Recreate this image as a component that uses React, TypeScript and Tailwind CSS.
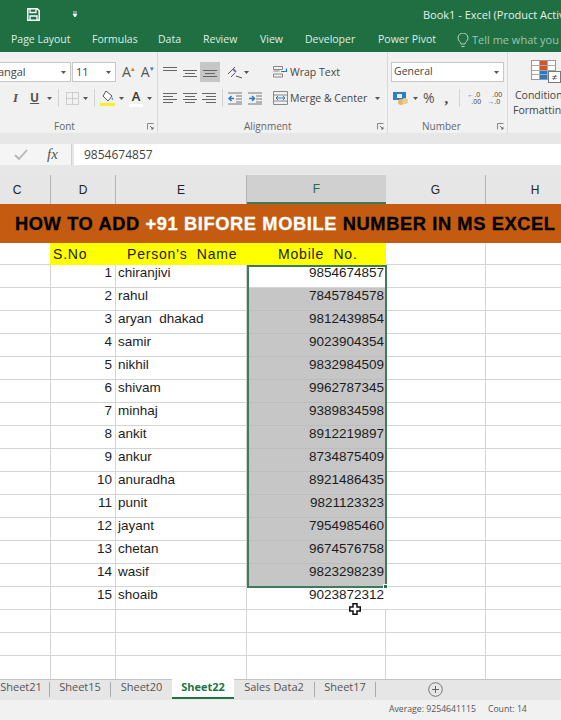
import React from 'react';

const people: [string, string][] = [
  ['chiranjivi', '9854674857'],
  ['rahul', '7845784578'],
  ['aryan  dhakad', '9812439854'],
  ['samir', '9023904354'],
  ['nikhil', '9832984509'],
  ['shivam', '9962787345'],
  ['minhaj', '9389834598'],
  ['ankit', '8912219897'],
  ['ankur', '8734875409'],
  ['anuradha', '8921486435'],
  ['punit', '9821123323'],
  ['jayant', '7954985460'],
  ['chetan', '9674576758'],
  ['wasif', '9823298239'],
  ['shoaib', '9023872312'],
];

const ribbonTabs = [
  ['Page Layout', 'w-[81px]'],
  ['Formulas', 'w-[66px]'],
  ['Data', 'w-[45px]'],
  ['Review', 'w-[57px]'],
  ['View', 'w-[45px]'],
  ['Developer', 'w-[73px]'],
  ['Power Pivot', 'w-[79px]'],
];

const sheetTabs = ['Sheet15', 'Sheet20', 'Sheet22', 'Sales Data2', 'Sheet17'];

const Caret = () => (
  <svg width="7" height="5" viewBox="0 0 7 5" className="shrink-0">
    <path d="M1 1h5L3.5 4z" fill="#555" />
  </svg>
);

// lignes horizontales pour les boutons d'alignement
const Lines = ({ rows, color = '#666' }: { rows: [number, number][]; color?: string }) => (
  <svg width="14" height="12" viewBox="0 0 14 12" className="shrink-0">
    {rows.map(([x, w], i) => (
      <rect key={i} x={x} y={i * 3 + 1} width={w} height="1" fill={color} />
    ))}
  </svg>
);

const Launcher = () => (
  <svg width="7" height="7" viewBox="0 0 7 7" className="shrink-0">
    <path d="M.5 6.5v-6h6" fill="none" stroke="#888" />
    <path d="M3 3l3 3M6 4v2H4" fill="none" stroke="#666" />
  </svg>
);

const Indent = ({ flip }: { flip?: boolean }) => (
  <svg width="14" height="13" viewBox="0 0 14 13" className="shrink-0">
    <path d="M0 1h14M8 4h6M8 7h6M8 10h6M0 12h14" stroke="#777" strokeWidth="1" />
    <path d={flip ? 'M1 6.5h5M4 4l2.5 2.5L4 9' : 'M6 6.5H1M3.5 4L1 6.5 3.5 9'} stroke="#2b79c2" strokeWidth="1.5" fill="none" />
  </svg>
);

const GroupLabel = ({ text, className }: { text: string; className: string }) => (
  <div className="mt-auto flex h-[14px] items-center">
    <span className={`text-[10px] text-[#666] ${className}`}>{text}</span>
    <span className="ml-auto mr-[3px] flex">
      <Launcher />
    </span>
  </div>
);

function Ribbon() {
  return (
    <div className="flex h-[81px] shrink-0 bg-[#f1f1f1] text-[#444]">
      {/* Font */}
      <div className="flex w-[158px] shrink-0 flex-col border-r border-[#d8d8d8] pt-[10px]">
        <div className="flex h-[20px] items-center">
          <div className="flex h-full w-[71px] items-center overflow-hidden border border-l-0 border-[#c8c8c8] bg-white pr-[3px]">
            <span className="-ml-[12px] text-[11px]">Mangal</span>
            <span className="ml-auto">
              <Caret />
            </span>
          </div>
          <div className="ml-[1px] flex h-full w-[44px] items-center border border-[#c8c8c8] bg-white px-[3px]">
            <span className="text-[11px]">11</span>
            <span className="ml-auto">
              <Caret />
            </span>
          </div>
          <span className="ml-[6px] text-[14px] leading-none text-[#555]">A</span>
          <span className="mb-[8px] text-[7px] leading-none text-[#c07a1d]">▴</span>
          <span className="ml-[6px] text-[14px] leading-none text-[#555]">A</span>
          <span className="mb-[8px] text-[7px] leading-none text-[#2b79c2]">▾</span>
        </div>
        <div className="mt-[5px] flex h-[22px] items-center">
          <span className="ml-[13px] font-['Liberation_Serif',serif] text-[13px] font-bold italic text-[#555]">I</span>
          <span className="ml-[12px] text-[12px] font-bold text-[#555] underline">U</span>
          <span className="ml-[7px]">
            <Caret />
          </span>
          <span className="ml-[5px] h-[18px] w-px bg-[#d4d4d4]" />
          <svg width="13" height="13" viewBox="0 0 13 13" className="ml-[7px] shrink-0">
            <path d="M.5.5h12v12H.5zM6.5.5v12M.5 6.5h12" fill="none" stroke="#aaa" strokeDasharray="1 1" />
          </svg>
          <span className="ml-[3px]">
            <Caret />
          </span>
          <span className="ml-[5px] h-[18px] w-px bg-[#d4d4d4]" />
          <div className="ml-[5px] flex w-[15px] flex-col items-center">
            <svg width="13" height="12" viewBox="0 0 13 12" className="shrink-0">
              <path d="M5 1l6 5-4 5-5-5z" fill="#fff" stroke="#555" />
              <path d="M11 7c1 1.500 1.500 2.500.5 3-1-.5-1-1.500-.5-3z" fill="#3b8fd0" />
            </svg>
            <span className="mt-[1px] h-[3px] w-[15px] bg-[#f6f02c]" />
          </div>
          <span className="ml-[3px]">
            <Caret />
          </span>
          <div className="ml-[4px] flex w-[14px] flex-col items-center">
            <span className="text-[13px] font-semibold leading-[13px] text-[#333]">A</span>
            <span className="mt-[1px] h-[3px] w-[14px] bg-white" />
          </div>
          <span className="ml-[3px]">
            <Caret />
          </span>
        </div>
        <GroupLabel text="Font" className="ml-[54px]" />
      </div>

      {/* Alignment */}
      <div className="flex w-[230px] shrink-0 flex-col border-r border-[#d8d8d8] pt-[10px]">
        <div className="flex h-[20px] items-center">
          <span className="ml-[5px]">
            <Lines rows={[[0, 14], [0, 14], [20, 0]]} />
          </span>
          <span className="ml-[6px]">
            <Lines rows={[[20, 0], [0, 14], [2, 10], [0, 14]]} />
          </span>
          <span className="ml-[3px] flex h-[20px] w-[20px] items-center justify-center bg-[#c6c6c6]">
            <Lines rows={[[20, 0], [0, 14], [2, 10], [0, 14]]} />
          </span>
          <svg width="16" height="14" viewBox="0 0 16 14" className="ml-[7px] shrink-0">
            <path d="M1 9l7-7M4 12l4-4M9 11l6 2" stroke="#555" fill="none" />
            <path d="M6 4l3 3" stroke="#8a6ab0" strokeWidth="2" />
          </svg>
          <span className="ml-0">
            <Caret />
          </span>
          <svg width="15" height="14" viewBox="0 0 15 14" className="ml-[23px] shrink-0">
            <path d="M.5 1.500h9v3h-9zM.5 6h6M.5 9h9v3h-9z" fill="none" stroke="#888" />
            <path d="M8 6.500h5.500v-3" fill="none" stroke="#2b79c2" strokeWidth="1.200" />
          </svg>
          <span className="ml-[2px] whitespace-nowrap text-[10.5px] leading-none">Wrap Text</span>
        </div>
        <div className="mt-[5px] flex h-[22px] items-center">
          <span className="ml-[5px]">
            <Lines rows={[[0, 14], [0, 10], [0, 14], [0, 10]]} />
          </span>
          <span className="ml-[6px]">
            <Lines rows={[[0, 14], [2, 10], [0, 14], [2, 10]]} />
          </span>
          <span className="ml-[5px]">
            <Lines rows={[[0, 14], [4, 10], [0, 14], [4, 10]]} />
          </span>
          <span className="ml-[6px] h-[18px] w-px bg-[#d4d4d4]" />
          <span className="ml-[5px]">
            <Indent />
          </span>
          <span className="ml-[6px]">
            <Indent flip />
          </span>
          <svg width="15" height="14" viewBox="0 0 15 14" className="ml-[11px] shrink-0">
            <path d="M.5.5h14v13H.5zM.5 4h14M.5 10h14" fill="none" stroke="#888" />
            <path d="M3 7h9M5 5L3 7l2 2M10 5l2 2-2 2" fill="none" stroke="#2b79c2" />
          </svg>
          <span className="ml-[2px] whitespace-nowrap text-[10.5px] leading-none">Merge &amp; Center</span>
          <span className="ml-[7px]">
            <Caret />
          </span>
        </div>
        <GroupLabel text="Alignment" className="ml-[86px]" />
      </div>

      {/* Number */}
      <div className="flex w-[120px] shrink-0 flex-col border-r border-[#d8d8d8] pt-[10px]">
        <div className="ml-[3px] flex h-[20px] w-[113px] items-center border border-[#c8c8c8] bg-white px-[2px]">
          <span className="text-[10.5px]">General</span>
          <span className="ml-auto mr-[1px]">
            <Caret />
          </span>
        </div>
        <div className="mt-[5px] flex h-[22px] items-center">
          <svg width="16" height="15" viewBox="0 0 16 15" className="ml-[5px] shrink-0">
            <rect x="0" y="1" width="13" height="8" fill="#2f7fbe" />
            <rect x="4" y="3" width="5" height="4" fill="#e8eef5" />
            <circle cx="8" cy="11" r="3" fill="#e3b566" />
            <circle cx="12" cy="10" r="3" fill="#edcd8d" />
          </svg>
          <span className="ml-[3px]">
            <Caret />
          </span>
          <span className="ml-[4px] text-[14px] leading-none text-[#555]">%</span>
          <span className="ml-[10px] font-['Liberation_Serif',serif] text-[15px] font-bold leading-[10px] text-[#444]">,</span>
          <span className="ml-[11px] h-[18px] w-px bg-[#d4d4d4]" />
          <div className="ml-[7px] grid w-[15px] grid-cols-[7px_8px] font-['Liberation_Sans',sans-serif] text-[7px] leading-[7px]">
            <span className="text-[#2b79c2]">←</span>
            <span>.0</span>
            <span className="col-span-2 pl-[4px]">.00</span>
          </div>
          <div className="ml-[5px] grid w-[15px] grid-cols-[7px_8px] font-['Liberation_Sans',sans-serif] text-[7px] leading-[7px]">
            <span className="col-span-2 pl-[5px]">.00</span>
            <span className="text-[#2b79c2]">→</span>
            <span>.0</span>
          </div>
        </div>
        <GroupLabel text="Number" className="ml-[34px]" />
      </div>

      {/* Conditional formatting */}
      <div className="flex min-w-0 flex-1 flex-col overflow-hidden pt-[8px]">
        <div className="relative ml-[23px] h-[23px] w-[30px] shrink-0">
          <div className="grid h-[20px] w-[25px] grid-cols-3 grid-rows-4 gap-px border border-[#999] bg-[#aaa]">
            <span className="bg-white" />
            <span className="bg-[#d2562b]" />
            <span className="bg-white" />
            <span className="bg-white" />
            <span className="bg-[#d2562b]" />
            <span className="bg-white" />
            <span className="bg-white" />
            <span className="bg-[#2b79c2]" />
            <span className="bg-[#2b79c2]" />
            <span className="bg-white" />
            <span className="bg-[#2b79c2]" />
            <span className="bg-white" />
          </div>
          <span className="absolute bottom-0 right-0 flex h-[12px] w-[13px] items-center justify-center border border-[#777] bg-white text-[10px] leading-none text-[#333]">≠</span>
        </div>
        <span className="ml-[7px] mt-[5px] whitespace-nowrap text-[10.5px] leading-[15px]">Conditional</span>
        <span className="ml-[5px] whitespace-nowrap text-[10.5px] leading-[15px]">Formatting</span>
      </div>
    </div>
  );
}

function Sheet() {
  const cols = ['w-[51px]', 'w-[65px]', 'w-[131px]', 'w-[139px]', 'w-[100px]', 'flex-1'];
  return (
    <div className="relative h-[436px] shrink-0 overflow-hidden bg-white font-['Liberation_Sans',sans-serif] text-[13.500px] text-[#1c1c1c]">
      {/* yellow header */}
      <div className="flex h-[22px]">
        <span className="w-[50px] border-b border-[#d4d4d4]" />
        <div className="flex w-[336px] items-center bg-[#ffff00] text-[14px] tracking-[0.8px]">
          <span className="w-[65px] pl-[3px]">S.No</span>
          <span className="w-[132px] pl-[12px] whitespace-pre">Person's  Name</span>
          <span className="w-[139px] pl-[31px] whitespace-pre">Mobile  No.</span>
        </div>
        <span className={`${cols[4]} border-r border-b border-[#d4d4d4]`} />
        <span className="flex-1 border-b border-[#d4d4d4]" />
      </div>

      {people.map(([name, phone], i) => (
        <div key={name} className="flex h-[23px] leading-[15px]">
          <span className={`${cols[0]} border-r border-b border-[#d4d4d4]`} />
          <span className={`${cols[1]} border-r border-b border-[#d4d4d4] pr-[3px] text-right`}>{i + 1}</span>
          <span className={`${cols[2]} whitespace-pre border-r border-b border-[#d4d4d4] pl-[2px]`}>{name}</span>
          <span
            className={`${cols[3]} border-b pr-[2px] text-right ${
              i > 0 && i < 14 ? 'border-[#bdbdbd] bg-[#c6c6c6]' : 'border-[#d4d4d4]'
            }`}
          >
            {phone}
          </span>
          <span className={`${cols[4]} border-r border-b border-[#d4d4d4]`} />
          <span className="flex-1 border-b border-[#d4d4d4]" />
        </div>
      ))}

      {[0, 1, 2].map((i) => (
        <div key={i} className="flex h-[23px]">
          <span className={`${cols[0]} border-r ${i < 2 ? 'border-b' : ''} border-[#d4d4d4]`} />
          <span className={`${cols[1]} border-r ${i < 2 ? 'border-b' : ''} border-[#d4d4d4]`} />
          <span className={`${cols[2]} border-r ${i < 2 ? 'border-b' : ''} border-[#d4d4d4]`} />
          <span className={`${cols[3]} border-r ${i < 2 ? 'border-b' : ''} border-[#d4d4d4]`} />
          <span className={`${cols[4]} border-r ${i < 2 ? 'border-b' : ''} border-[#d4d4d4]`} />
          <span className={`flex-1 ${i < 2 ? 'border-b' : ''} border-[#d4d4d4]`} />
        </div>
      ))}

      {/* selection */}
      <div className="absolute left-[247px] top-[22px] h-[323px] w-[140px] border-2 border-[#3f7a5c]">
        <span className="absolute -bottom-[3px] -right-[3px] h-[5px] w-[5px] border border-white bg-[#217346]" />
      </div>

      {/* pointer */}
      <svg width="12" height="12" viewBox="0 0 12 12" className="absolute left-[349px] top-[360px]">
        <path d="M4 .75h4V4h3.250v4H8v3.250H4V8H.75V4H4z" fill="#fff" stroke="#111" strokeWidth="1.500" />
      </svg>
    </div>
  );
}

export default function App() {
  return (
    <div className="flex h-[720px] w-[561px] flex-col overflow-hidden bg-white font-['Open_Sans',sans-serif]">
      {/* title bar */}
      <div className="h-[52px] shrink-0 bg-[#1f6f43] text-[#dfeee5]">
        <div className="flex h-[28px] items-center">
          <svg width="13" height="13" viewBox="0 0 13 13" className="ml-[27px] shrink-0">
            <path d="M.75.75h9.500l2 2v9.500H.75z" fill="none" stroke="#fff" strokeWidth="1.500" />
            <path d="M3 1v3.500h6V1M3 12V8h7v4" fill="none" stroke="#fff" strokeWidth="1.300" />
          </svg>
          <svg width="6" height="7" viewBox="0 0 6 7" className="ml-[32px] shrink-0">
            <path d="M1 1h4M1 3h4l-2 3z" stroke="#fff" strokeWidth=".8" fill="#fff" />
          </svg>
          <span className="ml-[345px] whitespace-nowrap text-[11px] leading-none text-[#e7f1eb]">Book1 - Excel (Product Activation Failed)</span>
        </div>
        <div className="flex h-[24px] items-center text-[10.5px]">
          <div className="flex pl-[11px]">
            {ribbonTabs.map(([tab, width]) => (
              <span key={tab} className={`${width} whitespace-nowrap`}>
                {tab}
              </span>
            ))}
          </div>
          <svg width="12" height="15" viewBox="0 0 12 15" className="shrink-0">
            <path d="M4 11c0-2-3-3-3-6a5 5 0 0 1 10 0c0 3-3 4-3 6zM4.500 13.500h3" fill="none" stroke="#b9d6c5" />
          </svg>
          <span className="ml-[3px] whitespace-nowrap text-[11px] text-[#9fc4ae]">Tell me what you want to do</span>
        </div>
      </div>

      <Ribbon />

      {/* formula bar */}
      <div className="flex h-[42px] shrink-0 items-start bg-[#e7e7e7] pt-[11px]">
        <div className="flex h-[21px] w-[72px] items-center border-r border-[#d0d0d0] bg-[#f5f5f5]">
          <svg width="14" height="11" viewBox="0 0 14 11" className="ml-[14px] shrink-0">
            <path d="M1 6l4 4 8-9" fill="none" stroke="#b5b5b5" strokeWidth="1.800" />
          </svg>
          <span className="ml-[19px] font-['Liberation_Serif',serif] text-[15px] italic text-[#555]">fx</span>
        </div>
        <div className="ml-[2px] flex h-[21px] flex-1 items-center bg-white pl-[10px] text-[12px] text-[#444]">9854674857</div>
      </div>

      {/* column headers */}
      <div className="flex h-[29px] shrink-0 overflow-hidden bg-[#e6e6e6] font-['Liberation_Sans',sans-serif] text-[12px] text-[#222]">
        <span className="-ml-[16px] flex w-[67px] shrink-0 items-center justify-center border-r border-[#b5b5b5]">C</span>
        <span className="flex w-[65px] shrink-0 items-center justify-center border-r border-[#b5b5b5]">D</span>
        <span className="flex w-[131px] shrink-0 items-center justify-center border-r border-[#b5b5b5]">E</span>
        <span className="flex w-[139px] shrink-0 items-center justify-center border-b-2 border-[#3f7a5c] bg-[#d0d0d0] text-[#2a6b49]">F</span>
        <span className="flex w-[100px] shrink-0 items-center justify-center border-r border-[#b5b5b5]">G</span>
        <span className="flex w-[98px] shrink-0 items-center justify-center">H</span>
      </div>

      {/* band */}
      <div className="flex h-[39px] shrink-0 items-center whitespace-pre bg-[#c55a11] pl-[15px] font-['Liberation_Sans',sans-serif] text-[18.300px] font-bold tracking-[0.6px] text-black [-webkit-text-stroke:0.3px]">
        <span>HOW TO ADD </span>
        <span className="text-white">+91 BIFORE MOBILE </span>
        <span>NUMBER IN MS EXCEL</span>
      </div>

      <Sheet />

      {/* sheet tabs */}
      <div className="flex h-[21px] shrink-0 items-start border-t border-[#c4c4c4] bg-[#e6e6e6] text-[11px] leading-[12px] text-[#555]">
        <span className="-ml-[7px] mt-[2px] flex h-[15px] w-[57px] items-center justify-center border-r border-[#aaa] pb-[5px]">Sheet21</span>
        {sheetTabs.map((tab) =>
          tab === 'Sheet22' ? (
            <span key={tab} className="-mt-px flex h-[20px] w-[62px] items-start justify-center border-b-2 border-[#217346] bg-white pt-[2px] font-bold text-[#217346]">
              {tab}
            </span>
          ) : (
            <span key={tab} className={`mt-[2px] flex h-[15px] items-center justify-center border-r border-[#aaa] pb-[5px] ${tab === 'Sales Data2' ? 'w-[81px]' : 'w-[61px]'} ${tab === 'Sheet20' ? 'border-r-0' : ''}`}>
              {tab}
            </span>
          ),
        )}
        <svg width="15" height="15" viewBox="0 0 15 15" className="ml-[52px] mt-[2px] shrink-0">
          <circle cx="7.500" cy="7.500" r="6.800" fill="none" stroke="#777" />
          <path d="M7.500 4v7M4 7.500h7" stroke="#666" />
        </svg>
      </div>

      {/* status bar */}
      <div className="flex h-[20px] shrink-0 items-center overflow-hidden bg-[#f1f1f1] pl-[389px] text-[8.700px] text-[#555]">
        <span className="whitespace-nowrap">Average: 9254641115</span>
        <span className="ml-[12px] whitespace-nowrap">Count: 14</span>
      </div>
    </div>
  );
}
